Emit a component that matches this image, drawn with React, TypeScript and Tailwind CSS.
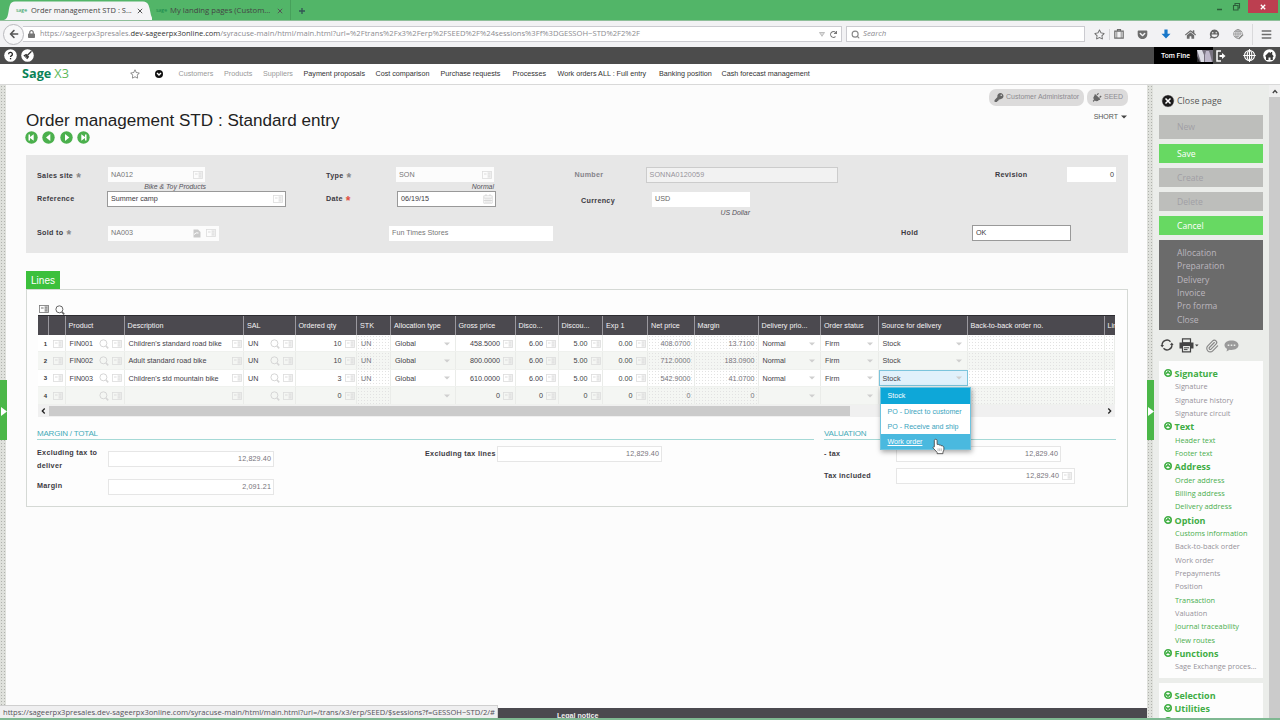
import type { ReactNode } from 'react';
import clsx from 'clsx';
import { Paperclip, Search } from 'lucide-react';
import {
  FaArrowDown, FaArrowLeft, FaGetPocket, FaHome, FaKey, FaLock, FaPlug, FaRegStar, FaRedo, FaBars,
} from 'react-icons/fa';

type CellKind = 'index' | 'card' | 'text' | 'number' | 'select';

interface Column {
  id: string;
  label: string;
  kind: CellKind;
  search?: boolean;
  card?: boolean;
  locked?: boolean;
}

const columns: Column[] = [
  { id: 'index', label: '', kind: 'index' },
  { id: 'open', label: '', kind: 'card' },
  { id: 'product', label: 'Product', kind: 'text', search: true, card: true },
  { id: 'description', label: 'Description', kind: 'text', card: true },
  { id: 'sal', label: 'SAL', kind: 'text', search: true, card: true },
  { id: 'qty', label: 'Ordered qty', kind: 'number', card: true },
  { id: 'stk', label: 'STK', kind: 'text', locked: true },
  { id: 'allocation', label: 'Allocation type', kind: 'select' },
  { id: 'gross', label: 'Gross price', kind: 'number', card: true },
  { id: 'disc1', label: 'Disco...', kind: 'number', card: true },
  { id: 'disc2', label: 'Discou...', kind: 'number', card: true },
  { id: 'exp', label: 'Exp 1', kind: 'number', card: true },
  { id: 'net', label: 'Net price', kind: 'number', locked: true },
  { id: 'margin', label: 'Margin', kind: 'number', locked: true },
  { id: 'priority', label: 'Delivery prio...', kind: 'select' },
  { id: 'status', label: 'Order status', kind: 'select' },
  { id: 'source', label: 'Source for delivery', kind: 'select' },
  { id: 'b2b', label: 'Back-to-back order no.', kind: 'text', locked: true },
  { id: 'line', label: 'Lin', kind: 'text', locked: true },
];

const rows: string[][] = [
  ['1', '', 'FIN001', "Children's standard road bike", 'UN', '10', 'UN', 'Global', '458.5000', '6.00', '5.00', '0.00', '408.0700', '13.7100', 'Normal', 'Firm', 'Stock', '', ''],
  ['2', '', 'FIN002', 'Adult standard road bike', 'UN', '10', 'UN', 'Global', '800.0000', '6.00', '5.00', '0.00', '712.0000', '183.0900', 'Normal', 'Firm', 'Stock', '', ''],
  ['3', '', 'FIN003', "Children's std mountain bike", 'UN', '3', 'UN', 'Global', '610.0000', '6.00', '5.00', '0.00', '542.9000', '41.0700', 'Normal', 'Firm', 'Stock', '', ''],
  ['4', '', '', '', '', '0', '', '', '0', '0', '0', '0', '0', '0', '', '', '', '', ''],
];

const gridCols =
  'grid grid-cols-[10.5px_17px_59px_119.5px_51.5px_61.5px_34px_64.5px_60px_43px_44.5px_45px_46.5px_64px_62.5px_57.5px_89px_137px_10.5px]';

const menuLinks = [
  { label: 'Customers', muted: true, box: 'w-[45.5px]' },
  { label: 'Products', muted: true, box: 'w-[39px]' },
  { label: 'Suppliers', muted: true, box: 'w-[40.5px]' },
  { label: 'Payment proposals', box: 'w-[72px]' },
  { label: 'Cost comparison', box: 'w-[65px]' },
  { label: 'Purchase requests', box: 'w-[72px]' },
  { label: 'Processes', box: 'w-[45px]' },
  { label: 'Work orders ALL : Full entry', box: 'w-[101.5px]' },
  { label: 'Banking position', box: 'w-[62.5px]' },
  { label: 'Cash forecast management', box: 'w-[100px]' },
];

const sections = [
  { title: 'Signature', items: [['Signature', 0], ['Signature history', 0], ['Signature circuit', 0]] },
  { title: 'Text', items: [['Header text', 1], ['Footer text', 1]] },
  { title: 'Address', items: [['Order address', 1], ['Billing address', 1], ['Delivery address', 1]] },
  {
    title: 'Option',
    items: [
      ['Customs information', 1], ['Back-to-back order', 0], ['Work order', 0], ['Prepayments', 0], ['Position', 0],
      ['Transaction', 1], ['Valuation', 0], ['Journal traceability', 1], ['View routes', 1],
    ],
  },
  { title: 'Functions', items: [['Sage Exchange proces...', 0]] },
];

function CardIcon({ className = 'text-[#dcdcdc]' }: { className?: string }) {
  return (
    <svg viewBox="0 0 10 8" className={clsx('w-[10px] h-[8px] shrink-0', className)} fill="none" stroke="currentColor">
      <rect x="5.5" y="0.5" width="4" height="7" fill="currentColor" fillOpacity="0.35" stroke="none" />
      <rect x="0.5" y="0.5" width="9" height="7" strokeWidth="0.8" />
      <path d="M2 3h2.6" strokeWidth="1" />
      <path d="M5.8 2.2h2.6M5.8 4h2.6M5.8 5.8h2.6" strokeWidth="0.9" />
    </svg>
  );
}

function SearchIcon({ className = 'text-[#d6d6d6]' }: { className?: string }) {
  return (
    <svg viewBox="0 0 10 10" className={clsx('w-[10px] h-[10px] shrink-0', className)} fill="none" stroke="currentColor">
      <circle cx="4.4" cy="4.3" r="3.5" strokeWidth="1" />
      <path d="M7 7l2.2 2.4" strokeWidth="1.6" />
    </svg>
  );
}

function CalendarIcon() {
  return (
    <svg viewBox="0 0 10 10" className="w-[10px] h-[10px] text-[#cfcfcf]" fill="none" stroke="currentColor" strokeWidth="0.7">
      <path d="M0.8 1.8h8.4v7.4H0.8zM0.8 4h8.4M0.8 6.5h8.4M3 4v5M5 4v5M7 4v5" />
      <path d="M3 0.3v1.5M7 0.3v1.5" strokeWidth="1" />
    </svg>
  );
}

function ArrowDown({ className = 'text-[#cfcfcf]' }: { className?: string }) {
  return (
    <svg viewBox="0 0 6 4" className={clsx('w-[6px] h-[4px] shrink-0', className)}>
      <path d="M0 0.4h6L3 3.6z" fill="currentColor" />
    </svg>
  );
}

function ChevronBadge({ down }: { down?: boolean }) {
  return (
    <svg viewBox="0 0 8 8" className="w-[8px] h-[8px] shrink-0 -mt-px">
      <circle cx="4" cy="4" r="3.2" fill="#fff" stroke="#3fae43" strokeWidth="1.6" />
      <path d={down ? 'M2 3.1l2 2 2-2' : 'M2 4.9l2-2 2 2'} fill="none" stroke="#3fae43" strokeWidth="1.5" />
    </svg>
  );
}

function RoundNav({ d }: { d: string }) {
  return (
    <svg viewBox="0 0 13 13" className="w-[13px] h-[13px]">
      <circle cx="6.5" cy="6.5" r="6.2" fill="#4bb04d" />
      <path d={d} fill="#fff" />
    </svg>
  );
}

function Label({ children, star, className }: { children: ReactNode; star?: string; className?: string }) {
  return (
    <div className={clsx('text-[7.2px] font-bold tracking-[0.3px] whitespace-nowrap shrink-0', className)}>
      {children}
      {star && <span className={clsx('ml-[3px] text-[12px] leading-[0] font-bold relative top-[4px]', star)}>*</span>}
    </div>
  );
}

function Field({ children, className, icons }: { children: ReactNode; className?: string; icons?: ReactNode }) {
  return (
    <div className={clsx('flex items-center shrink-0 pl-[3px] pr-[2px] text-[7.2px]', className)}>
      <span className="flex-1 pt-px whitespace-nowrap">{children}</span>
      <span className="flex items-center gap-[3px]">{icons}</span>
    </div>
  );
}

function CloseMark() {
  return (
    <svg viewBox="0 0 6 6" className="relative w-[6px] h-[6px] mt-px ml-[2px]">
      <path d="M0.8 0.8l4.4 4.4M5.2 0.8l-4.4 4.4" stroke="#555" strokeWidth="1" />
    </svg>
  );
}

function TabBar() {
  return (
    <div className="flex h-[20px] bg-[#52b568] font-['Open_Sans',sans-serif] text-[7.5px] text-[#444]">
      <div className="flex relative w-[152px] h-[20px] items-center pt-px">
        <svg viewBox="0 0 152 20" className="absolute inset-0 w-[152px] h-[20px]">
          <path d="M4 20C9 19 8 10 10 5Q11 1.5 15 1.5H143Q147 1.5 148.5 5C151 11 150 19 155 20Z" fill="#f4f4f6" />
        </svg>
        <span className="relative ml-[16px] w-[15px] text-[5.2px] text-[#259a58]">sage</span>
        <span className="relative w-[104px] whitespace-nowrap">Order management STD : S...</span>
        <CloseMark />
      </div>
      <div className="flex items-center w-[139px] pt-px border-r border-[#47a05b]">
        <span className="ml-[4px] w-[14px] text-[5.2px] text-[#15854a]">sage</span>
        <span className="w-[105px] text-[7.7px] whitespace-nowrap">My landing pages (Custom...</span>
        <CloseMark />
      </div>
      <svg viewBox="0 0 8 8" className="w-[8px] h-[8px] mt-[7px] ml-[7px]">
        <path d="M4 1v6M1 4h6" stroke="#355" strokeWidth="1.3" />
      </svg>
      <div className="flex ml-auto h-[13px] items-center">
        <svg viewBox="0 0 26 10" className="w-[26px] h-[10px] mr-[5px]" fill="none" stroke="#2d5f3a">
          <path d="M0 7.5h5" strokeWidth="1.5" />
          <path d="M16.5 3.5h4.5v4.5h-4.5zM18 3V1.5h4.5v4.500H21.5" strokeWidth="1.1" />
        </svg>
        <div className="flex items-center justify-center w-[30px] h-[13px] mr-[2px] bg-[#bc3f50]">
          <svg viewBox="0 0 6 6" className="w-[6px] h-[6px]">
            <path d="M0.8 0.8l4.4 4.4M5.2 0.8l-4.4 4.4" stroke="#fff" strokeWidth="1.3" />
          </svg>
        </div>
      </div>
    </div>
  );
}

function UrlBar() {
  return (
    <div className="flex items-center h-[27px] bg-[#f2f2f4] font-['Open_Sans',sans-serif] text-[7.5px] text-[#8b8b90] border-t border-[#8fbf9a]">
      <div className="z-10 flex items-center justify-center shrink-0 w-[21px] h-[21px] ml-[3px] rounded-full border border-[#b9b9bd] bg-[#f8f8f9]">
        <FaArrowLeft className="w-[10px] h-[10px] text-[#555]" />
      </div>
      <div className="flex items-center w-[819px] h-[16px] -ml-[1px] border border-[#cbcbd0] border-l-0 bg-white">
        <FaLock className="w-[7px] h-[8px] ml-[5px] text-[#777]" />
        <span className="ml-[5px] flex-1 whitespace-nowrap">
          <span className="text-[7.3px]">https://sageerpx3presales.</span>
          <span className="text-[#333]">dev-sageerpx3online.com</span>
          <span className="text-[7.64px]">/syracuse-main/html/main.html?url=%2Ftrans%2Fx3%2Ferp%2FSEED%2F%24sessions%3Ff%3DGESSOH~STD%2F2%2F</span>
        </span>
        <svg viewBox="0 0 6 5" className="w-[6px] h-[5px] mr-[5px]">
          <path d="M0.5 0.5h5L3 4.3z" fill="#ddd" stroke="#aaa" strokeWidth="0.7" />
        </svg>
        <FaRedo className="w-[7px] h-[7px] mr-[4px] text-[#777]" />
      </div>
      <div className="flex items-center w-[239px] h-[16px] ml-[4px] border border-[#cbcbd0] bg-white">
        <Search className="w-[9px] h-[9px] ml-[4px] text-[#888]" strokeWidth={3} />
        <span className="ml-[3px] text-[7.8px] italic">Search</span>
      </div>
      <div className="flex items-center text-[#6c6c6c]">
        <FaRegStar className="w-[11px] h-[11px] ml-[9px]" />
        <div className="w-px h-[11px] ml-[4px] bg-[#d4d4d6]" />
        <svg viewBox="0 0 10 10" className="w-[10px] h-[10px] ml-[4px]" fill="none" stroke="currentColor">
          <path d="M0.8 2.2h8.4v7H0.8zM3.5 2V0.6h3V2" strokeWidth="1.2" />
          <path d="M2.8 2.5v6.5M7.2 2.5v6.5" strokeWidth="0.7" />
        </svg>
        <FaGetPocket className="w-[11px] h-[11px] ml-[13px]" />
        <svg viewBox="0 0 10 10" className="w-[10px] h-[10px] ml-[13px]">
          <path d="M3.4 0.5h3.2v4.2h2.9L5 9.5.5 4.700h2.900z" fill="#1877c9" />
        </svg>
        <FaHome className="w-[11px] h-[11px] ml-[14px]" />
        <svg viewBox="0 0 11 11" className="w-[11px] h-[11px] ml-[13px]">
          <path d="M5.5 0.6a4.8 4.4 0 1 1-2.6 8.2L0.7 9.8 1.5 7.5A4.6 4.6 0 0 1 5.5 0.6z" fill="#666" />
          <circle cx="3.8" cy="3.7" r="0.7" fill="#fff" />
          <circle cx="7.2" cy="3.7" r="0.7" fill="#fff" />
          <path d="M2.5 5.500h6a3 2.5 0 0 1-6 0z" fill="#f2f2f4" />
        </svg>
        <svg viewBox="0 0 11 11" className="w-[11px] h-[11px] ml-[13px]" fill="none" stroke="#888" strokeWidth="0.7">
          <circle cx="5" cy="5" r="4.4" />
          <path d="M0.6 5h8.8M5 0.6v8.8M1.4 2.7h7.2M1.4 7.3h7.2" />
          <ellipse cx="5" cy="5" rx="2.2" ry="4.4" />
          <path d="M5.500 10l4.500-4.500" stroke="#f2f2f4" strokeWidth="3" />
          <path d="M5.500 10l4.500-4.500" strokeWidth="1.6" />
        </svg>
        <div className="w-px h-[21px] ml-[8px] bg-[#d9d9db]" />
        <FaBars className="w-[11px] h-[11px] ml-[8px]" />
      </div>
    </div>
  );
}

function DarkBar() {
  return (
    <div className="flex items-center h-[17px] bg-[#4c4c4c]">
      <svg viewBox="0 0 13 13" className="w-[13px] h-[13px] ml-[4px]">
        <circle cx="6.5" cy="6.5" r="6.3" fill="#fff" />
        <path d="M4.6 5.2a1.9 1.8 0 1 1 2.7 1.6q-.8.4-.8 1.3" fill="none" stroke="#222" strokeWidth="1.3" />
        <rect x="5.9" y="9" width="1.3" height="1.3" fill="#222" />
      </svg>
      <svg viewBox="0 0 13 13" className="w-[13px] h-[13px] ml-[4px]">
        <circle cx="6.5" cy="6.5" r="6.3" fill="#fff" />
        <path d="M10.500 2.200L6.500 6.300" stroke="#333" strokeWidth="1.3" />
        <path d="M2.4 6.400l2.800-1.600 3 3-2 2.400z" fill="#333" />
        <path d="M3.800 7.600l1.200-.8M5 8.800l1-1" stroke="#fff" strokeWidth="0.500" />
      </svg>
      <div className="flex items-center h-[17px] w-[59px] ml-auto bg-black text-white">
        <span className="ml-[7px] pt-px w-[36px] font-['Roboto',sans-serif] font-medium text-[7px] whitespace-nowrap">Tom Fine</span>
        <svg viewBox="0 0 16 12" className="w-[16px] h-[12px]">
          <rect width="16" height="12" fill="#77727f" />
          <path d="M0 0h5l2 5v7H4z" fill="#dcdce4" />
          <path d="M9 1h3l1 3 2 8H8V5z" fill="#bdb7c9" />
          <path d="M0 6l3 6H0z" fill="#2b2a2e" />
        </svg>
      </div>
      <svg viewBox="0 0 10 12" className="w-[10px] h-[12px] ml-[3px]" fill="none" stroke="#fff">
        <path d="M5 1H1v10h4" strokeWidth="1.5" />
        <path d="M3.5 6h3" strokeWidth="2" />
        <path d="M6 3l3.5 3L6 9z" fill="#fff" stroke="none" />
      </svg>
      <svg viewBox="0 0 13 13" className="w-[13px] h-[13px] ml-[17px]" fill="none" stroke="#fff" strokeWidth="1.1">
        <circle cx="6.5" cy="6.5" r="5" />
        <ellipse cx="6.5" cy="6.5" rx="2.3" ry="5" />
        <path d="M0.2 6.5h12.6M6.5 0v13" />
      </svg>
      <svg viewBox="0 0 13 13" className="w-[13px] h-[13px] ml-[7px] mr-[4px]">
        <circle cx="6.5" cy="6.5" r="6.3" fill="#fff" />
        <path d="M1.8 7.2L6 3l1.8 1.2V3h1.4v2.6l1.6 1.6-1 .8v3H7.5V8.5h-2V11H3V7.5z" fill="#3a3a3a" />
      </svg>
    </div>
  );
}

function MenuBar() {
  return (
    <div className="flex items-center h-[21px] bg-white border-b border-[#d9d9d9]">
      <div className="ml-[22px] w-[108px] -mt-[3px] font-['Open_Sans',sans-serif] text-[12.7px] leading-[18px]">
        <span className="font-bold text-[#0b8357]">Sage</span>
        <span className="ml-[3px] text-[#5cb85a]">X3</span>
      </div>
      <FaRegStar className="w-[10px] h-[10px] text-[#888]" />
      <svg viewBox="0 0 8 8" className="w-[8px] h-[8px] ml-[14.5px] mr-[16px]">
        <circle cx="4" cy="4" r="4" fill="#111" />
        <path d="M2 3l2 2 2-2" fill="none" stroke="#fff" strokeWidth="1.4" />
      </svg>
      {menuLinks.map((link) => (
        <a key={link.label} href="#" className={clsx('shrink-0 pt-px text-[7.2px] whitespace-nowrap', link.box, link.muted ? 'text-[#999]' : 'text-[#333]')}>
          {link.label}
        </a>
      ))}
    </div>
  );
}

function Rail() {
  return (
    <div className="z-10 w-[6px] shrink-0 bg-[#dfe1dc] bg-[radial-gradient(circle,#b0b2ad_0.6px,transparent_0.9px)] bg-[size:3px_3px]">
      <div className="flex items-center w-[7px] h-[60px] mt-[295px] bg-[#4bb748]">
        <svg viewBox="0 0 6 9" className="w-[6px] h-[9px] ml-px mt-[2px]">
          <path d="M0 0l6 4.5L0 9z" fill="#fff" />
        </svg>
      </div>
    </div>
  );
}

function HeaderForm() {
  return (
    <div className="h-[98px] pt-[12px] pl-[11px] bg-[#e7e7e7] text-[#3c3a42]">
      <div className="flex items-center h-[15px]">
        <Label className="w-[71px] pt-[4px]" star="text-[#888]">Sales site</Label>
        <Field className="w-[97px] h-[15px] bg-[#fcfcfc] text-[#777]" icons={<CardIcon />}>NA012</Field>
        <Label className="w-[70px] ml-[121px] pt-[4px]" star="text-[#888]">Type</Label>
        <Field className="w-[98px] h-[15px] bg-[#fcfcfc] text-[#777]" icons={<CardIcon />}>SON</Field>
        <Label className="w-[71px] ml-[80.5px] pt-px text-[#85838a]">Number</Label>
        <Field className="w-[192px] h-[16px] bg-[#f2f2f2] border border-[#ccc] text-[#96939a] tracking-[0.1px]">SONNA0120059</Field>
        <Label className="w-[72px] ml-[157.5px] pt-px">Revision</Label>
        <Field className="w-[49px] h-[15px] bg-white text-right">0</Field>
      </div>
      <div className="flex h-[9px] pt-[2px] items-center text-[6.9px] italic text-[#55525a]">
        <div className="w-[169px] text-right">Bike &amp; Toy Products</div>
        <div className="w-[288px] text-right">Normal</div>
      </div>
      <div className="flex items-center h-[16px]">
        <Label className="w-[70px] pt-px">Reference</Label>
        <Field className="w-[179px] h-[16px] bg-white border border-[#999]" icons={<CardIcon />}>Summer camp</Field>
        <Label className="w-[71px] ml-[40px] pt-px" star="text-[#e2503f]">Date</Label>
        <Field className="w-[99px] h-[16px] bg-white border border-[#999]" icons={<CalendarIcon />}>06/19/15</Field>
        <Label className="w-[71px] ml-[85px] pt-[5px]">Currency</Label>
        <Field className="w-[98px] h-[15px] bg-white text-[#666]">USD</Field>
      </div>
      <div className="w-[713px] h-[9px] text-right text-[6.9px] leading-[12px] italic text-[#55525a]">US Dollar</div>
      <div className="flex items-center h-[16px] mt-[9px]">
        <Label className="w-[71px] pt-px" star="text-[#888]">Sold to</Label>
        <Field
          className="w-[111px] h-[15px] bg-[#fcfcfc] text-[#777]"
          icons={
            <>
              <svg viewBox="0 0 8 9" className="w-[8px] h-[9px]">
                <path d="M0.5 0.5h4.5l2.5 2.500v5.500H0.5z" fill="#c9c9c9" />
                <path d="M1 5.500q2-2.500 4.500-1.500" stroke="#fff" fill="none" />
              </svg>
              <CardIcon className="ml-[2px] mr-px text-[#dcdcdc]" />
            </>
          }
        >
          NA003
        </Field>
        <Field className="w-[164px] h-[15px] ml-[170px] bg-white text-[#777]">Fun Times Stores</Field>
        <Label className="w-[71px] ml-[348px] pt-px">Hold</Label>
        <Field className="w-[99px] h-[16px] bg-white border border-[#999]">OK</Field>
      </div>
    </div>
  );
}

function Cell({ column, value, active }: { column: Column; value: string; active?: boolean }) {
  if (column.kind === 'index') {
    return <div className="flex items-center justify-end pt-[2px] pr-[1.5px] text-[6px] font-bold text-[#333]">{value}</div>;
  }
  if (column.kind === 'card') {
    return <div className="flex items-center justify-end pt-px pr-[1.5px] border-r border-[#eaece9]"><CardIcon /></div>;
  }
  return (
    <div
      className={clsx(
        'relative flex items-center min-w-0 gap-[3px] pt-px pl-[4px] border-r border-[#eaece9] whitespace-nowrap',
        column.kind === 'select' ? 'pr-[5px]' : 'pr-[1.5px]',
        column.locked && 'text-[#77747b] bg-[radial-gradient(circle,#e2e2e2_0.5px,transparent_0.8px)] bg-[size:3px_3px]',
        active && 'bg-[#e1f1fb] outline outline-[#7cc4dc] -outline-offset-1',
      )}
    >
      <span className={clsx('flex-1 pt-px', column.kind === 'number' && 'text-right', column.locked && 'pr-[1.5px]')}>{value}</span>
      {column.search && <SearchIcon />}
      {column.card && <CardIcon />}
      {column.kind === 'select' && <ArrowDown />}
      {active && <SourceMenu />}
    </div>
  );
}

function SourceMenu() {
  return (
    <ul className="absolute z-20 top-[17.5px] left-[1px] w-[91px] h-[63px] bg-white border border-[#6fc3de] shadow-[1px_2px_5px_rgba(0,0,0,0.35)] text-[7.1px] leading-[16px] text-[#3aa3bd]">
      <li className="pl-[7px] h-[15.4px] bg-[#0ea7d8] text-white">Stock</li>
      <li className="pl-[7px] h-[15.4px]">PO - Direct to customer</li>
      <li className="pl-[7px] h-[15.4px]">PO - Receive and ship</li>
      <li className="relative pl-[7px] h-[14.8px] bg-[#4ab9df] text-white underline">
        Work order
        <svg viewBox="0 0 14 18" className="absolute left-[51px] top-[3.5px] w-[13px] h-[17px]">
          <path
            d="M4 1.2c.9 0 1.5.6 1.5 1.5v4l1.7.2.4.5 1.8.1.4.6 1.7.3c.9.3 1.300 1 1.300 2v2.400l-1 2.200v1.700H5.500v-1.400L1.300 10.700c-.5-.9.3-1.8 1.2-1.300V2.700c0-.9.6-1.500 1.500-1.500z"
            fill="#fff" stroke="#444" strokeWidth="0.9"
          />
          <path d="M6.5 11v3M8.3 11v3M10 11v3" stroke="#888" strokeWidth="0.6" />
        </svg>
      </li>
    </ul>
  );
}

function LinesTable() {
  return (
    <div className="w-[1077px] ml-[11px] text-[7.2px] text-[#444148]">
      <div className={clsx(gridCols, 'h-[20px] bg-[#4b494f] border-t border-[#2d2c31] text-[#f4f3f5] text-[7.2px] overflow-hidden')}>
        {columns.map((column) => (
          <div key={column.id} className="flex items-center pt-px pl-[3px] overflow-hidden whitespace-nowrap border-r border-[#9a989e] last:border-r-0">
            {column.label}
          </div>
        ))}
      </div>
      {rows.map((row, i) => (
        <div key={row[0]} className={clsx(gridCols, 'h-[17.4px] border-b border-[#eff1ee]', i % 2 ? 'bg-[#f4f6f3]' : 'bg-white')}>
          {columns.map((column, c) => (
            <Cell key={column.id} column={column} value={row[c]} active={i === 2 && column.id === 'source'} />
          ))}
        </div>
      ))}
      <div className="flex items-center h-[12px] pt-px bg-[#f0f0f0]">
        <svg viewBox="0 0 11 10" className="w-[11px] h-[10px]"><path d="M6.7 2.5L4.3 5l2.4 2.5" fill="none" stroke="#222" strokeWidth="1.3" /></svg>
        <div className="w-[801px] h-[10px] bg-[#cbcbcb]" />
        <svg viewBox="0 0 11 10" className="w-[11px] h-[10px] ml-auto"><path d="M4.3 2.5L6.7 5 4.3 7.5" fill="none" stroke="#222" strokeWidth="1.3" /></svg>
      </div>
    </div>
  );
}

function Totals() {
  const box = 'justify-end h-[16px] border border-[#e6e6e6] bg-white text-[7.2px] text-right text-[#77747b] tracking-[0.1px]';
  const heading = 'h-[12.5px] border-b border-[#a5d9d6] text-[8px] leading-[12.5px] tracking-[-0.2px] text-[#45abb8]';
  return (
    <div className="flex ml-[10px] mt-[11px] text-[#3c3a42]">
      <div className="w-[777px]">
        <h3 className={heading}>MARGIN / TOTAL</h3>
        <div className="flex">
          <div className="w-[388px]">
            <div className="flex mt-[6px]">
              <Label className="w-[71px] leading-[13.3px]">Excluding tax to<br />deliver</Label>
              <Field className={clsx(box, 'w-[166px] mt-[5px]')}>12,829.40</Field>
            </div>
            <div className="flex items-center mt-[6px] h-[16px]">
              <Label className="w-[71px]">Margin</Label>
              <Field className={clsx(box, 'w-[166px]')}>2,091.21</Field>
            </div>
          </div>
          <div className="flex items-center h-[16px] mt-[6px]">
            <Label className="w-[72px]">Excluding tax lines</Label>
            <Field className={clsx(box, 'w-[165px]')}>12,829.40</Field>
          </div>
        </div>
      </div>
      <div className="w-[292px] ml-[10px]">
        <h3 className={heading}>VALUATION</h3>
        <div className="flex items-center h-[16px] mt-[6px]">
          <Label className="w-[72px]">- tax</Label>
          <Field className={clsx(box, 'w-[165px]')}>12,829.40</Field>
        </div>
        <div className="flex items-center h-[16px] mt-[6px]">
          <Label className="w-[72px]">Tax included</Label>
          <Field className={clsx(box, 'w-[179px]')} icons={<CardIcon className="ml-[3px] text-[#dcdcdc]" />}>12,829.40</Field>
        </div>
      </div>
    </div>
  );
}

function Content() {
  return (
    <div className="flex flex-col w-[1141px] pl-[20px] bg-[#fcfcfc]">
      <div className="flex justify-end gap-[3px] mt-[4px] pr-[19px] text-[7px] text-[#8d8b91]">
        <div className="flex items-center gap-[2px] w-[95px] h-[17px] pl-[5px] rounded-[7px] bg-[#dcdbdb] whitespace-nowrap">
          <FaKey className="w-[10px] h-[9px] text-[#666]" />
          Customer Administrator
        </div>
        <div className="flex items-center gap-[3px] w-[41px] h-[17px] pl-[5px] rounded-[7px] bg-[#dcdbdb]">
          <FaPlug className="w-[9px] h-[10px] rotate-45 text-[#666]" />
          SEED
        </div>
      </div>
      <div className="flex justify-between h-[25px] pr-[20px]">
        <h1 className="pt-[0.5px] text-[17.1px] leading-[27px] text-[#222] whitespace-nowrap">Order management STD : Standard entry</h1>
        <div className="flex items-center gap-[3px] h-[22px] text-[7px] text-[#555]">SHORT <ArrowDown className="text-[#444]" /></div>
      </div>
      <div className="flex gap-[4.4px] h-[13px] -ml-px">
        <RoundNav d="M3.5 3.5h1.5v2.4l3.7-2.7v6.6L5 7.1v2.4H3.500z" />
        <RoundNav d="M8.300 3v7L4 6.500z" />
        <RoundNav d="M5 3v7l4.300-3.500z" />
        <RoundNav d="M9.500 3.500H8v2.400L4.300 3.200v6.600L8 7.100v2.400h1.500z" />
      </div>
      <div className="w-[1102px] mt-[11px]">
        <HeaderForm />
        <div className="flex items-center justify-center w-[34px] h-[18px] mt-[18px] pt-px bg-[#3cc03c] text-white text-[10px]">Lines</div>
        <div className="h-[218px] border border-[#d5d9d5] bg-[#fdfdfd]">
          <div className="flex items-center gap-[6px] h-[13px] mt-[12px] ml-[12px]">
            <CardIcon className="text-[#777]" />
            <SearchIcon className="mt-[2px] text-[#666]" />
          </div>
          <LinesTable />
          <Totals />
        </div>
      </div>
      <div className="flex mt-auto h-[10px] -ml-[20px] pl-[551px] bg-[#4b494f] overflow-hidden font-bold text-[7.1px] leading-[17px] text-[#f0f0f0]">
        Legal notice
      </div>
    </div>
  );
}

function SideButton({ label, on, className = 'h-[19px]' }: { label: string; on?: boolean; className?: string }) {
  return (
    <button className={clsx('flex items-center w-[104px] pl-[18px] pt-px text-[8.6px] shrink-0', className, on ? 'bg-[#67d962] text-white' : 'bg-[#bdbebb] text-[#a19fa5]')}>
      {label}
    </button>
  );
}

function SidePanel() {
  return (
    <div className="flex flex-col w-[116px] pl-[6px] bg-[#ebedea] overflow-hidden font-['Open_Sans',sans-serif]">
      <div className="flex items-center shrink-0 h-[30px] pt-px gap-[2px] text-[8.9px] text-[#555]">
        <svg viewBox="0 0 14 14" className="w-[14px] h-[14px] ml-[2px]">
          <circle cx="7" cy="7" r="6.3" fill="#1c1c1c" stroke="#fff" strokeWidth="0.8" />
          <path d="M4.5 4.5l5 5M9.5 4.5l-5 5" stroke="#fff" strokeWidth="1.5" />
        </svg>
        Close page
      </div>
      <div className="flex flex-col gap-[5px]">
        <SideButton label="New" className="h-[24px]" />
        <SideButton label="Save" on />
        <SideButton label="Create" />
        <SideButton label="Delete" />
        <SideButton label="Cancel" on />
      </div>
      <ul className="w-[104px] h-[90px] shrink-0 mt-[5px] pt-[7px] pl-[18px] bg-[#6b6b6b] text-[8.6px] leading-[13.33px] text-[#bbb6be]">
        {['Allocation', 'Preparation', 'Delivery', 'Invoice', 'Pro forma', 'Close'].map((item) => (
          <li key={item}>{item}</li>
        ))}
      </ul>
      <div className="flex items-center shrink-0 h-[31px] text-[#444]">
        <svg viewBox="0 0 14 12" className="w-[14px] h-[12px] ml-px -mt-px" fill="none" stroke="currentColor" strokeWidth="1.3">
          <path d="M2.2 6.800A4.800 4.800 0 0 1 10.500 2.700M11.800 5.200A4.800 4.800 0 0 1 3.500 9.300" />
          <path d="M0.400 6h3.600L2.200 8.600zM13.600 6h-3.600L11.800 3.400z" fill="currentColor" stroke="none" />
        </svg>
        <svg viewBox="0 0 20 15" className="w-[20px] h-[15px] ml-[5px]">
          <path d="M3.5 0.8h8v4h-8z" fill="#ebedea" stroke="#444" strokeWidth="1.2" />
          <path d="M0.5 4.5h14v6h-14z" fill="#444" />
          <path d="M3.5 7.5h8v6.3h-8z" fill="#ebedea" stroke="#444" strokeWidth="1.2" />
          <path d="M5 9.8h5M5 11.6h3.5" stroke="#444" />
          <path d="M16 6.5h3.6l-1.8 2z" fill="#444" />
        </svg>
        <Paperclip className="w-[14px] h-[14px] ml-[6px] text-[#888]" strokeWidth={2} />
        <svg viewBox="0 0 15 12" className="w-[15px] h-[12px] ml-[5px]">
          <path d="M7.5 0.500c4 0 7 2 7 4.700s-3 4.700-7 4.700q-1 0-1.800-.2L2.500 11.500l.6-2.700C1.500 8 .5 6.700.5 5.200.5 2.500 3.500.5 7.500.5z" fill="#9a9a9a" />
          <path d="M3.700 4.400h1.600v1.600H3.700zM6.700 4.400h1.600v1.600H6.700zM9.700 4.400h1.600v1.600H9.700z" fill="#ebedea" />
        </svg>
      </div>
      <div className="w-[104px] h-[317px] shrink-0 pt-[6px] pl-[5px] bg-[#fdfdfd] leading-[13.33px]">
        {sections.map((section) => (
          <div key={section.title}>
            <h4 className="flex items-center gap-[2.5px] h-[13.33px] text-[9px] font-bold text-[#41ad45]"><ChevronBadge />{section.title}</h4>
            <ul className="pl-[11px] text-[7.35px] whitespace-nowrap">
              {section.items.map(([label, enabled]) => (
                <li key={label} className={clsx('h-[13.33px]', enabled ? 'text-[#4aae4e]' : 'text-[#96929a]')}>{label}</li>
              ))}
            </ul>
          </div>
        ))}
      </div>
      <div className="w-[104px] h-[35px] shrink-0 mt-[5px] pt-[6px] pl-[5px] bg-[#fdfdfd] overflow-hidden">
        {['Selection', 'Utilities'].map((title) => (
          <h4 key={title} className="flex items-center gap-[2.5px] h-[13.33px] text-[9px] font-bold text-[#41ad45]"><ChevronBadge down />{title}</h4>
        ))}
        <div className="flex pt-[2px]"><ChevronBadge down /></div>
      </div>
    </div>
  );
}

export default function App() {
  return (
    <div className="relative flex flex-col w-[1280px] h-[720px] overflow-hidden bg-white font-['Liberation_Sans',Arial,sans-serif]">
      <TabBar />
      <UrlBar />
      <DarkBar />
      <MenuBar />
      <div className="flex h-[633px]">
        <Rail />
        <Content />
        <Rail />
        <SidePanel />
        <div className="flex flex-col w-[11px] bg-[#cbcbcb]">
          <div className="flex items-center justify-center h-[12px] bg-[#f0f0f0]">
            <svg viewBox="0 0 6 5" className="w-[6px] h-[5px]"><path d="M0.8 4L3 1.5 5.2 4" fill="none" stroke="#444" strokeWidth="1.3" /></svg>
          </div>
        </div>
      </div>
      <div className="h-[2px] bg-[#7fb892]" />
      <div className="absolute left-0 bottom-[2px] z-20 w-[498px] h-[13px] pl-[3px] bg-[#efeff0] border-t border-r border-[#cfcfcf] font-['Open_Sans',sans-serif] text-[7.6px] leading-[13px] text-[#55525a] whitespace-nowrap">
        https://sageerpx3presales.dev-sageerpx3online.com/syracuse-main/html/main.html?url=/trans/x3/erp/SEED/$sessions?f=GESSOH~STD/2/#
      </div>
    </div>
  );
}
